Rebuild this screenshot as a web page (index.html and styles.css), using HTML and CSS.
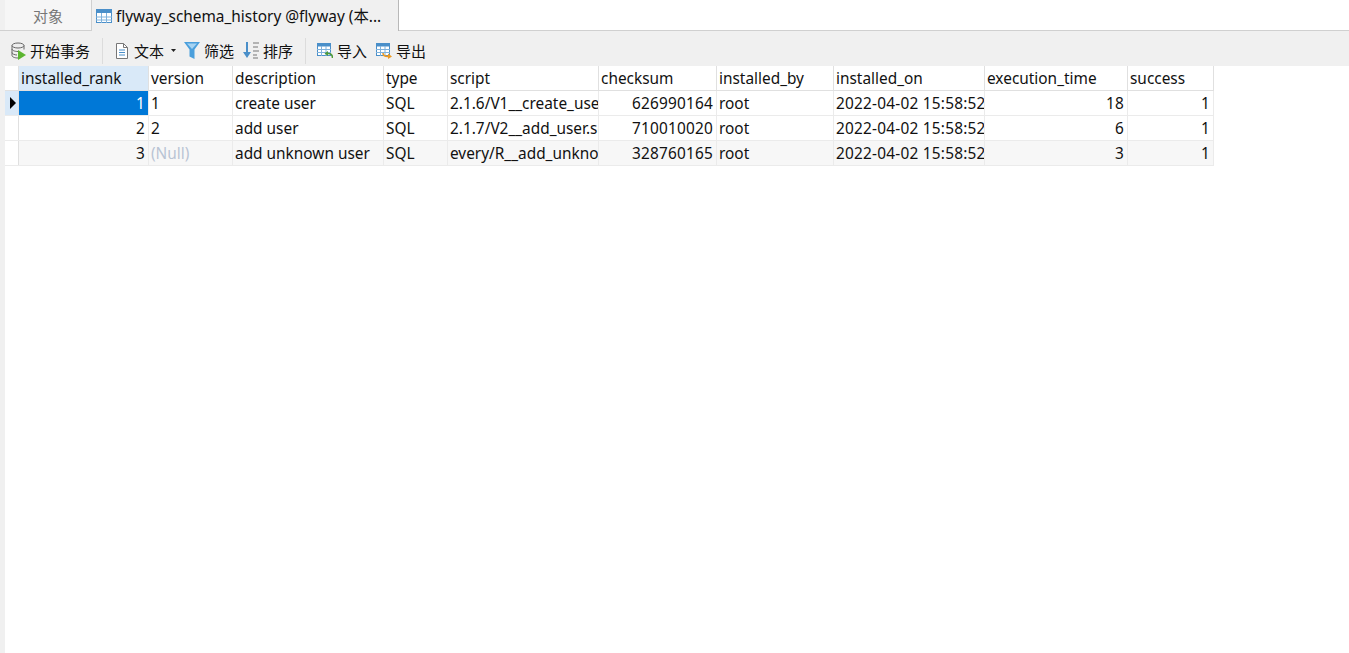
FILE: index.html
```html
<!DOCTYPE html>
<html lang="zh">
<head>
<meta charset="utf-8">
<title>flyway_schema_history</title>
<link rel="stylesheet" href="styles.css">
</head>
<body>
<div class="app">
  <div class="tabs">
    <div class="tab tab-objects">对象</div>
    <div class="tab tab-active">
      <svg class="ico" width="16" height="16" viewBox="0 0 16 16"><rect x="0.5" y="1.5" width="15" height="13" fill="#fff" stroke="#4a8fc9"/><rect x="0" y="1" width="16" height="4" fill="#4a8fc9"/><path d="M0 9h16M0 12h16M5.500 5v10M10.500 5v10" stroke="#7fb2dc" fill="none"/></svg>
      <span>flyway_schema_history @flyway (本...</span>
    </div>
    <div class="tab-rest"></div>
  </div>
  <div class="toolbar">
    <div class="tool tool-first">
      <svg class="ico" width="16" height="18" viewBox="0 0 16 18"><ellipse cx="7" cy="3.500" rx="6" ry="2.500" fill="#eee" stroke="#666"/><path d="M1 3.500v10c0 1.400 2.700 2.500 6 2.500M13 3.500v4M1 7c0 1.400 2.700 2.500 6 2.500M1 10.500c0 1.400 2.700 2.500 5 2.500" fill="none" stroke="#666"/><path d="M7 8l8 5-8 5z" fill="#5cb531"/></svg>
      <span>开始事务</span>
    </div>
    <div class="sep"></div>
    <div class="tool tool-text">
      <svg class="ico" width="14" height="16" viewBox="0 0 14 16"><path d="M1.500.5h7l4 4v11h-11z" fill="#fff" stroke="#777"/><path d="M8.500.5v4h4" fill="none" stroke="#777"/><path d="M4 7h6M4 9.500h6M4 12h6" stroke="#4a8fc9"/></svg>
      <span>文本</span>
      <svg class="caret" width="5" height="3" viewBox="0 0 5 3"><path d="M0 0h5L2.500 3z" fill="#222"/></svg>
    </div>
    <div class="tool tool-filter">
      <svg class="ico" width="16" height="17" viewBox="0 0 16 17"><path d="M0 0h16L10.500 7.500V17l-5-2.500V7.500z" fill="#4a9fdc"/><path d="M3 1.500h10L8 7z" fill="#a6d3f2"/></svg>
      <span>筛选</span>
    </div>
    <div class="tool tool-sort">
      <svg class="ico" width="16" height="17" viewBox="0 0 16 17"><path d="M4 0v12" stroke="#4a8fc9" stroke-width="2" fill="none"/><path d="M0 10h8l-4 6z" fill="#4a8fc9"/><path d="M10 1h6M10 5h5M10 9h6M10 13h4M10 16h5" stroke="#777" fill="none"/></svg>
      <span>排序</span>
    </div>
    <div class="sep sep-2"></div>
    <div class="tool tool-import">
      <svg class="ico" width="16" height="16" viewBox="0 0 16 16"><rect x=".5" y=".5" width="13" height="12" fill="#fff" stroke="#4a8fc9"/><rect x="0" y="0" width="14" height="3.500" fill="#4a8fc9"/><path d="M0 6.500h14M0 9.500h14M4.500 3v10M9 3v10" stroke="#7fb2dc" fill="none"/><path d="M15.500 15c0-3-2-4.500-4.500-4.500" fill="none" stroke="#4f9a3a" stroke-width="1.600"/><path d="M11 8l-3.500 2.500L11 13z" fill="#4f9a3a"/></svg>
      <span>导入</span>
    </div>
    <div class="tool tool-export">
      <svg class="ico" width="16" height="16" viewBox="0 0 16 16"><rect x=".5" y=".5" width="13" height="12" fill="#fff" stroke="#4a8fc9"/><rect x="0" y="0" width="14" height="3.500" fill="#4a8fc9"/><path d="M0 6.500h14M0 9.500h14M4.500 3v10M9 3v10" stroke="#7fb2dc" fill="none"/><path d="M7 10c0 2.500 2 3.500 5 3.500" fill="none" stroke="#ee9a22" stroke-width="1.600"/><path d="M12 10.500l4 3-4 2.500z" fill="#ee9a22"/></svg>
      <span>导出</span>
    </div>
  </div>
  <div class="body">
    <div class="gutter"></div>
    <div class="grid">
      <div class="row head">
        <div class="mark"></div>
        <div class="c c-sel">installed_rank</div>
        <div class="c">version</div>
        <div class="c">description</div>
        <div class="c">type</div>
        <div class="c">script</div>
        <div class="c">checksum</div>
        <div class="c">installed_by</div>
        <div class="c">installed_on</div>
        <div class="c">execution_time</div>
        <div class="c">success</div>
      </div>
      <div class="row">
        <div class="mark mark-cur"><svg width="6" height="12" viewBox="0 0 6 12"><path d="M0 0l6 6-6 6z" fill="#000"/></svg></div>
        <div class="c num c-active">1</div>
        <div class="c">1</div>
        <div class="c">create user</div>
        <div class="c">SQL</div>
        <div class="c">2.1.6/V1__create_user.sql</div>
        <div class="c num">626990164</div>
        <div class="c">root</div>
        <div class="c date">2022-04-02 15:58:52</div>
        <div class="c num">18</div>
        <div class="c num">1</div>
      </div>
      <div class="row">
        <div class="mark"></div>
        <div class="c num">2</div>
        <div class="c">2</div>
        <div class="c">add user</div>
        <div class="c">SQL</div>
        <div class="c">2.1.7/V2__add_user.sql</div>
        <div class="c num">710010020</div>
        <div class="c">root</div>
        <div class="c date">2022-04-02 15:58:52</div>
        <div class="c num">6</div>
        <div class="c num">1</div>
      </div>
      <div class="row alt">
        <div class="mark"></div>
        <div class="c num">3</div>
        <div class="c null">(Null)</div>
        <div class="c">add unknown user</div>
        <div class="c">SQL</div>
        <div class="c">every/R__add_unknown_user.sql</div>
        <div class="c num">328760165</div>
        <div class="c">root</div>
        <div class="c date">2022-04-02 15:58:52</div>
        <div class="c num">3</div>
        <div class="c num">1</div>
      </div>
    </div>
  </div>
</div>
</body>
</html>
```
FILE: styles.css
```css
* { box-sizing: border-box; }
html, body { margin: 0; height: 100%; background: #fff; overflow: hidden; }
body {
  font-family: "Noto Sans", "Noto Sans CJK SC", sans-serif;
  font-size: 15.4px;
  color: #111;
}
.app { height: 653px; display: flex; flex-direction: column; }

.tabs { display: flex; height: 31px; flex: none; }
.tab { display: flex; align-items: center; height: 31px; border-bottom: 1px solid #d0d0d0; }
.tab-objects { width: 92px; padding-left: 33px; font-size: 15px; background: #f6f6f6; color: #777; border-right: 1px solid #d0d0d0; box-shadow: inset 5px 0 0 #f0f0f0; }
.tab-active { width: 307px; padding-left: 4px; gap: 4px; background: #f0f0f0; border-bottom: 0; border-right: 1px solid #b8b8b8; white-space: nowrap; }
.tab-rest { flex: 1; border-bottom: 1px solid #d0d0d0; }

.toolbar { display: flex; align-items: center; height: 35px; flex: none; background: #f0f0f0; padding: 4px 0 0 11px; font-size: 15px; }
.tool { display: flex; align-items: center; gap: 3px; white-space: nowrap; }
.sep { width: 1px; height: 26px; background: #dcdcdc; margin: 0 12px; }
.sep-2 { margin: 0 11px 0 12px; }
.tool-text { gap: 5px; }
.caret { margin-left: 2px; }
.tool-filter { margin-left: 8px; gap: 4px; }
.tool-sort { margin-left: 9px; gap: 4px; }
.tool-import { gap: 4px; }
.tool-export { margin-left: 9px; gap: 4px; }

.body { flex: 1; display: flex; min-height: 0; }
.gutter { width: 5px; flex: none; background: #f0f0f0; }
.grid { display: flex; flex-direction: column; width: 1209px; }
.row {
  display: grid;
  grid-template-columns: 14px 130px 84px 151px 64px 151px 118px 117px 151px 143px 86px;
  height: 25px;
  border-bottom: 1px solid #ebebeb;
}
.row.head { border-bottom-color: #e0e0e0; }
.row.alt .c { background: #f7f7f7; }
.c {
  padding: 1px 2px 0;
  line-height: 24px;
  border-right: 1px solid #ebebeb;
  overflow: hidden;
  white-space: nowrap;
}
.head .c { border-right-color: #e0e0e0; }
.num { text-align: right; padding-right: 3px; letter-spacing: .2px; }
.date { letter-spacing: .22px; }
.mark { border-right: 1px solid #e0e0e0; display: flex; align-items: center; padding-left: 5px; }
.mark-cur { background: #d9e9f8; }
.c-sel { background: #d9e9f8; }
.c-active { background: #0078d7; color: #fff; }
.null { color: #b9c4d4; }
```
